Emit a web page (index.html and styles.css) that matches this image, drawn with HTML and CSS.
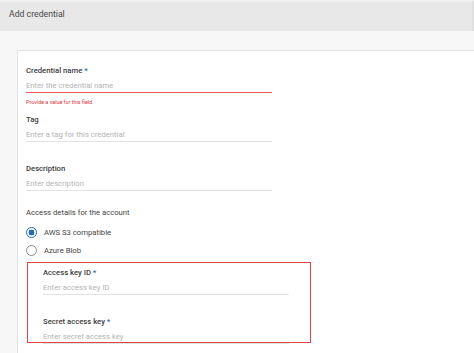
FILE: index.html
```html
<!DOCTYPE html>
<html>
  <head>
    <meta charset="UTF-8">
    <meta name="viewport" content="width=device-width, initial-scale=1">
    <title>Add credential</title>
    <link rel="stylesheet" href="styles.css">
  </head>
  <body>
    <div class="header">Add credential</div>

    <div class="page">
      <form class="card">
        <div class="field has-error">
          <label class="field-label">Credential name <span class="req">*</span></label>
          <input class="field-input is-invalid" type="text" placeholder="Enter the credential name">
          <div class="field-error">Provide a value for this field.</div>
        </div>

        <div class="field">
          <label class="field-label">Tag</label>
          <input class="field-input" type="text" placeholder="Enter a tag for this credential">
        </div>

        <div class="field">
          <label class="field-label">Description</label>
          <input class="field-input" type="text" placeholder="Enter description">
        </div>

        <div class="section-title">Access details for the account</div>
        <div class="radio-list">
          <label class="radio"><input type="radio" name="kind" checked> AWS S3 compatible</label>
          <label class="radio"><input type="radio" name="kind"> Azure Blob</label>
        </div>

        <div class="key-group">
          <div class="highlight"></div>
          <div class="field">
            <label class="field-label">Access key ID <span class="req">*</span></label>
            <input class="field-input" type="text" placeholder="Enter access key ID">
          </div>
          <div class="field">
            <label class="field-label">Secret access key <span class="req">*</span></label>
            <input class="field-input" type="text" placeholder="Enter secret access key">
          </div>
        </div>
      </form>
    </div>
  </body>
</html>
```

FILE: styles.css
```css
html, body {
  margin: 0;
  height: 100%;
  overflow: hidden;
}
body {
  background: #f7f7f7;
  font-family: Roboto, "Liberation Sans", Arial, sans-serif;
  color: #333;
}

.header {
  box-sizing: border-box;
  height: 31px;
  padding: 7px 9px 0;
  border-top: 2px solid #f1f1f1;
  border-right: 2px solid #e0e0e0;
  background: #e8e8e8;
  color: #474747;
  font-size: 8.7px;
  line-height: 11px;
}

.page {
  padding: 19px 0 0 17px;
}

.card {
  margin: 0 -20px 0 0;
  padding: 15px 0 40px 8px;
  background: white;
  border-top: 1px solid #e4e4e4;
  border-left: 1px solid #e4e4e4;
  font-size: 7.7px;
}

.field {
  display: flex;
  flex-direction: column;
  gap: 1px;
  margin-bottom: 22px;
}
.field.has-error {
  margin-bottom: 9px;
}
.field-label {
  line-height: 10px;
  font-weight: 500;
  color: #3c3c3c;
}
.req {
  color: #2b67ad;
}
.field-input {
  box-sizing: border-box;
  width: 246px;
  height: 16px;
  margin: 0;
  padding: 2px 0 0;
  border: none;
  border-bottom: 1px solid #e2e2e2;
  background: transparent;
  font: inherit;
  font-size: 7.7px;
  color: #333;
  outline: none;
}
.field-input::placeholder {
  color: #b3b3b3;
}
.field-input.is-invalid {
  border-bottom-color: #e25c5c;
}
.field-error {
  margin-top: 4px;
  line-height: 8px;
  font-size: 5.4px;
  color: #d8343a;
}

.section-title {
  margin-top: -5px;
  line-height: 10px;
  color: #444;
}

.radio-list {
  display: flex;
  flex-direction: column;
  gap: 4.5px;
  margin-top: 7px;
}
.radio {
  display: flex;
  align-items: center;
  gap: 7px;
  height: 14px;
  color: #444;
}
.radio input {
  appearance: none;
  box-sizing: border-box;
  width: 11px;
  height: 11px;
  margin: 0;
  border: 1px solid #8a8a8a;
  border-radius: 50%;
  background: white;
}
.radio input:checked {
  border: 1.5px solid #1f6cc0;
  background: radial-gradient(circle, #1f6cc0 0 2.8px, white 3.1px);
}

.key-group {
  position: relative;
  margin: 10px 0 0 17px;
}
.key-group .field:last-child {
  margin-bottom: 0;
}
.highlight {
  position: absolute;
  box-sizing: border-box;
  top: -5.5px;
  left: -16px;
  width: 284px;
  height: 81px;
  border: 1.7px solid #e2453f;
  pointer-events: none;
}
```
